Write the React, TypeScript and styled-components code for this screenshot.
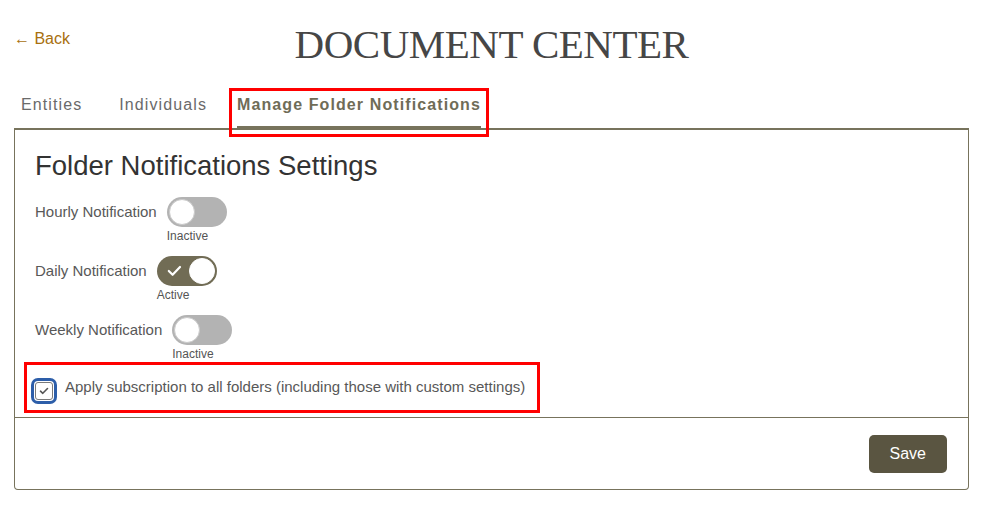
import React, { useState } from 'react';
import styled, { createGlobalStyle } from 'styled-components';

const GlobalStyle = createGlobalStyle`
    body {
        margin: 0;
        background: #fff;
        font-family: "Liberation Sans", Arial, sans-serif;
    }
`

const olive = '#77735c';

const Page = styled.div`
    padding: 0 14px;
`

const Header = styled.header`
    display: grid;
    grid-template-columns: 1fr auto 1fr;
    padding-top: 20px;
`

const BackLink = styled.a`
    margin-top: 10px;
    font-size: 16px;
    line-height: 18px;
    color: #a8700f;
    text-decoration: none;
    cursor: pointer;
    align-self: start;
`

const Title = styled.h1`
    margin: 0;
    font-family: "Liberation Serif", "Times New Roman", serif;
    font-weight: normal;
    font-size: 41px;
    line-height: 1.2;
    letter-spacing: -0.5px;
    color: #464646;
`

const TabList = styled.nav`
    display: flex;
    gap: 30px;
    margin-top: 27px;
    padding-left: 7px;
`

const Tab = styled.button<{ $active?: boolean }>`
    position: relative;
    z-index: 1;
    background: none;
    border: none;
    padding: 0 0 12px;
    font-family: inherit;
    font-size: 16px;
    line-height: 18px;
    letter-spacing: 1.1px;
    font-weight: ${p => (p.$active ? 'bold' : 'normal')};
    color: ${p => (p.$active ? '#6f6c57' : '#6a6a6a')};
    border-bottom: 3px solid ${p => (p.$active ? olive : 'transparent')};
    outline: ${p => (p.$active ? '3px solid #f00' : 'none')};
    outline-offset: 5px;
    cursor: pointer;
    &:first-child {
        margin-right: 7px;
    }
`

const Card = styled.section`
    margin-top: -1px;
    border: 1px solid ${olive};
    border-top-width: 2px;
    border-radius: 0 0 4px 4px;
`

const CardBody = styled.div`
    padding: 19px 20px 4px;
`

const Heading = styled.h2`
    margin: 0;
    font-size: 27.5px;
    line-height: 33px;
    font-weight: normal;
    color: #333;
`

const Settings = styled.div`
    display: flex;
    flex-direction: column;
    gap: 13px;
    margin-top: 15px;
`

const SettingRow = styled.div`
    display: flex;
    align-items: flex-start;
`

const Label = styled.span`
    font-size: 15px;
    line-height: 30px;
    color: #585858;
    margin-right: 10px;
`

const ToggleCol = styled.div`
    display: flex;
    flex-direction: column;
`

const Track = styled.button<{ $on: boolean }>`
    position: relative;
    width: 60px;
    height: 30px;
    padding: 0;
    border: none;
    border-radius: 15px;
    background: ${p => (p.$on ? '#716c55' : '#b3b3b3')};
    cursor: pointer;
`

const Knob = styled.span<{ $on: boolean }>`
    position: absolute;
    top: 2px;
    left: ${p => (p.$on ? '32px' : '2px')};
    width: 26px;
    height: 26px;
    box-sizing: border-box;
    border-radius: 50%;
    background: #fff;
    border: 1px solid ${p => (p.$on ? '#fff' : '#c9c9c9')};
`

const TickMark = styled.svg`
    position: absolute;
    left: 10px;
    top: 9px;
`

const Status = styled.span`
    margin-top: 2px;
    font-size: 12px;
    line-height: 14px;
    color: #555;
`

const ApplyRow = styled.label`
    display: flex;
    align-items: flex-start;
    width: fit-content;
    margin-top: 1px;
    margin-left: -11px;
    padding: 12px 12px 10px 8px;
    border: 3px solid #f00;
    cursor: pointer;
`

const Box = styled.span`
    flex: none;
    display: flex;
    align-items: center;
    justify-content: center;
    width: 18px;
    height: 18px;
    box-sizing: border-box;
    margin-top: 5px;
    border: 1px solid #7a7a7a;
    border-radius: 3px;
    background: #fff;
    box-shadow: 0 0 0 1px #fff, 0 0 0 4px #2d5ea9;
`

const ApplyText = styled.span`
    margin-left: 12px;
    font-size: 15px;
    line-height: 20px;
    color: #585858;
`

const Footer = styled.div`
    display: flex;
    justify-content: flex-end;
    padding: 17px 21px 16px;
    border-top: 1px solid ${olive};
`

const SaveButton = styled.button`
    height: 38px;
    padding: 0 21px;
    border: none;
    border-radius: 5px;
    background: #5a5541;
    color: #fff;
    font-family: inherit;
    font-size: 16px;
    cursor: pointer;
`

type ToggleProps = { label: string; on: boolean; onChange: () => void };

function ToggleSetting({ label, on, onChange }: ToggleProps) {
    return (
        <SettingRow>
            <Label>{label}</Label>
            <ToggleCol>
                <Track $on={on} onClick={onChange} aria-pressed={on}>
                    {on ? (
                        <TickMark width="15" height="12" viewBox="0 0 15 12">
                            <polyline points="1.8,6 5.6,9.8 13,2" fill="none" stroke="#fff" strokeWidth="2.2" strokeLinecap="round" strokeLinejoin="round" />
                        </TickMark>
                    ) : null}
                    <Knob $on={on} />
                </Track>
                <Status>{on ? 'Active' : 'Inactive'}</Status>
            </ToggleCol>
        </SettingRow>
    );
}

const tabs = ['Entities', 'Individuals', 'Manage Folder Notifications'];

function App() {
    const [activeTab, setActiveTab] = useState(2);
    const [settings, setSettings] = useState({ hourly: false, daily: true, weekly: false });
    const [applyAll, setApplyAll] = useState(true);

    const flip = (key: keyof typeof settings) => {
        setSettings(s => ({ ...s, [key]: !s[key] }));
    };

    return (
        <Page>
            <GlobalStyle />
            <Header>
                <BackLink>← Back</BackLink>
                <Title>DOCUMENT CENTER</Title>
            </Header>
            <TabList>
                {tabs.map((t, i) => (
                    <Tab key={t} $active={i === activeTab} onClick={() => setActiveTab(i)}>{t}</Tab>
                ))}
            </TabList>
            <Card>
                <CardBody>
                    <Heading>Folder Notifications Settings</Heading>
                    <Settings>
                        <ToggleSetting label="Hourly Notification" on={settings.hourly} onChange={() => flip('hourly')} />
                        <ToggleSetting label="Daily Notification" on={settings.daily} onChange={() => flip('daily')} />
                        <ToggleSetting label="Weekly Notification" on={settings.weekly} onChange={() => flip('weekly')} />
                    </Settings>
                    <ApplyRow onClick={() => setApplyAll(v => !v)}>
                        <Box>
                            {applyAll ? (
                                <svg width="10" height="8" viewBox="0 0 10 8">
                                    <polyline points="1.5,4.2 3.8,6.3 8.5,1.5" fill="none" stroke="#555" strokeWidth="1.6" strokeLinecap="round" strokeLinejoin="round" />
                                </svg>
                            ) : null}
                        </Box>
                        <ApplyText>Apply subscription to all folders (including those with custom settings)</ApplyText>
                    </ApplyRow>
                </CardBody>
                <Footer>
                    <SaveButton>Save</SaveButton>
                </Footer>
            </Card>
        </Page>
    );
}

export default App;
